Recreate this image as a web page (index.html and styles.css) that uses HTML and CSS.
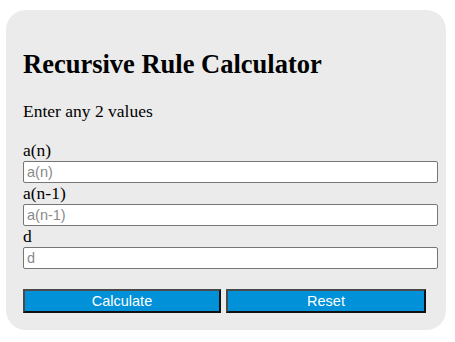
FILE: index.html
```html
<!DOCTYPE html>
<html>
<head>
    <meta charset="UTF-8">
    <title>Recursive Rule Calculator</title>
    <link rel="stylesheet" href="styles.css">
</head>
<body>
    <!-- Calculator card -->
    <div class="calc">
        <h2 class="calc-title">Recursive Rule Calculator</h2>
        <p class="calc-intro">Enter any 2 values</p>

        <div class="calc-fields">
            <label class="calc-label" for="an">a(n)</label>
            <input class="calc-input" id="an" type="text" placeholder="a(n)">

            <label class="calc-label" for="an1">a(n-1)</label>
            <input class="calc-input" id="an1" type="text" placeholder="a(n-1)">

            <label class="calc-label" for="d">d</label>
            <input class="calc-input" id="d" type="text" placeholder="d">
        </div>

        <div class="calc-actions">
            <button class="calc-btn calc-btn-main">Calculate</button>
            <button class="calc-btn calc-btn-reset">Reset</button>
        </div>
    </div>
</body>
</html>
```

FILE: styles.css
```css
body {
    margin: 0;
    padding: 10px 9px 12px 6px;
    font-family: "Liberation Serif", "Times New Roman", serif;
    background: #fff;
    color: #000;
}

.calc {
    width: 440px;
    box-sizing: border-box;
    background: #ebebeb;
    border-radius: 20px;
    padding: 39px 8px 17px 17px;
}

.calc-title {
    margin: 0;
    font-size: 26.5px;
    line-height: 30px;
    font-weight: bold;
}

.calc-intro {
    margin: 23px 0 19px;
    font-size: 17.5px;
    line-height: 19px;
}

.calc-fields {
    display: flex;
    flex-direction: column;
}

.calc-label {
    font-size: 17.5px;
    line-height: 21px;
}

.calc-input {
    width: 415px;
    height: 22px;
    box-sizing: border-box;
    margin: 0;
    padding: 0 3px;
    border: 1px solid #767676;
    border-radius: 2px;
    background: #fff;
    font-family: "Liberation Sans", Arial, sans-serif;
    font-size: 14.5px;
}

.calc-input::placeholder {
    color: #8a8a8a;
}

.calc-actions {
    display: flex;
    gap: 5px;
    margin-top: 20px;
}

.calc-btn {
    height: 24px;
    box-sizing: border-box;
    margin: 0;
    padding: 0;
    background: #0091d9;
    color: #fff;
    font-family: "Liberation Sans", Arial, sans-serif;
    font-size: 14.5px;
    border: 2px solid #111;
    border-top-color: #4a4a4a;
    border-left-color: #4a4a4a;
    cursor: pointer;
}

.calc-btn-main {
    width: 198px;
}

.calc-btn-reset {
    width: 200px;
}
```
